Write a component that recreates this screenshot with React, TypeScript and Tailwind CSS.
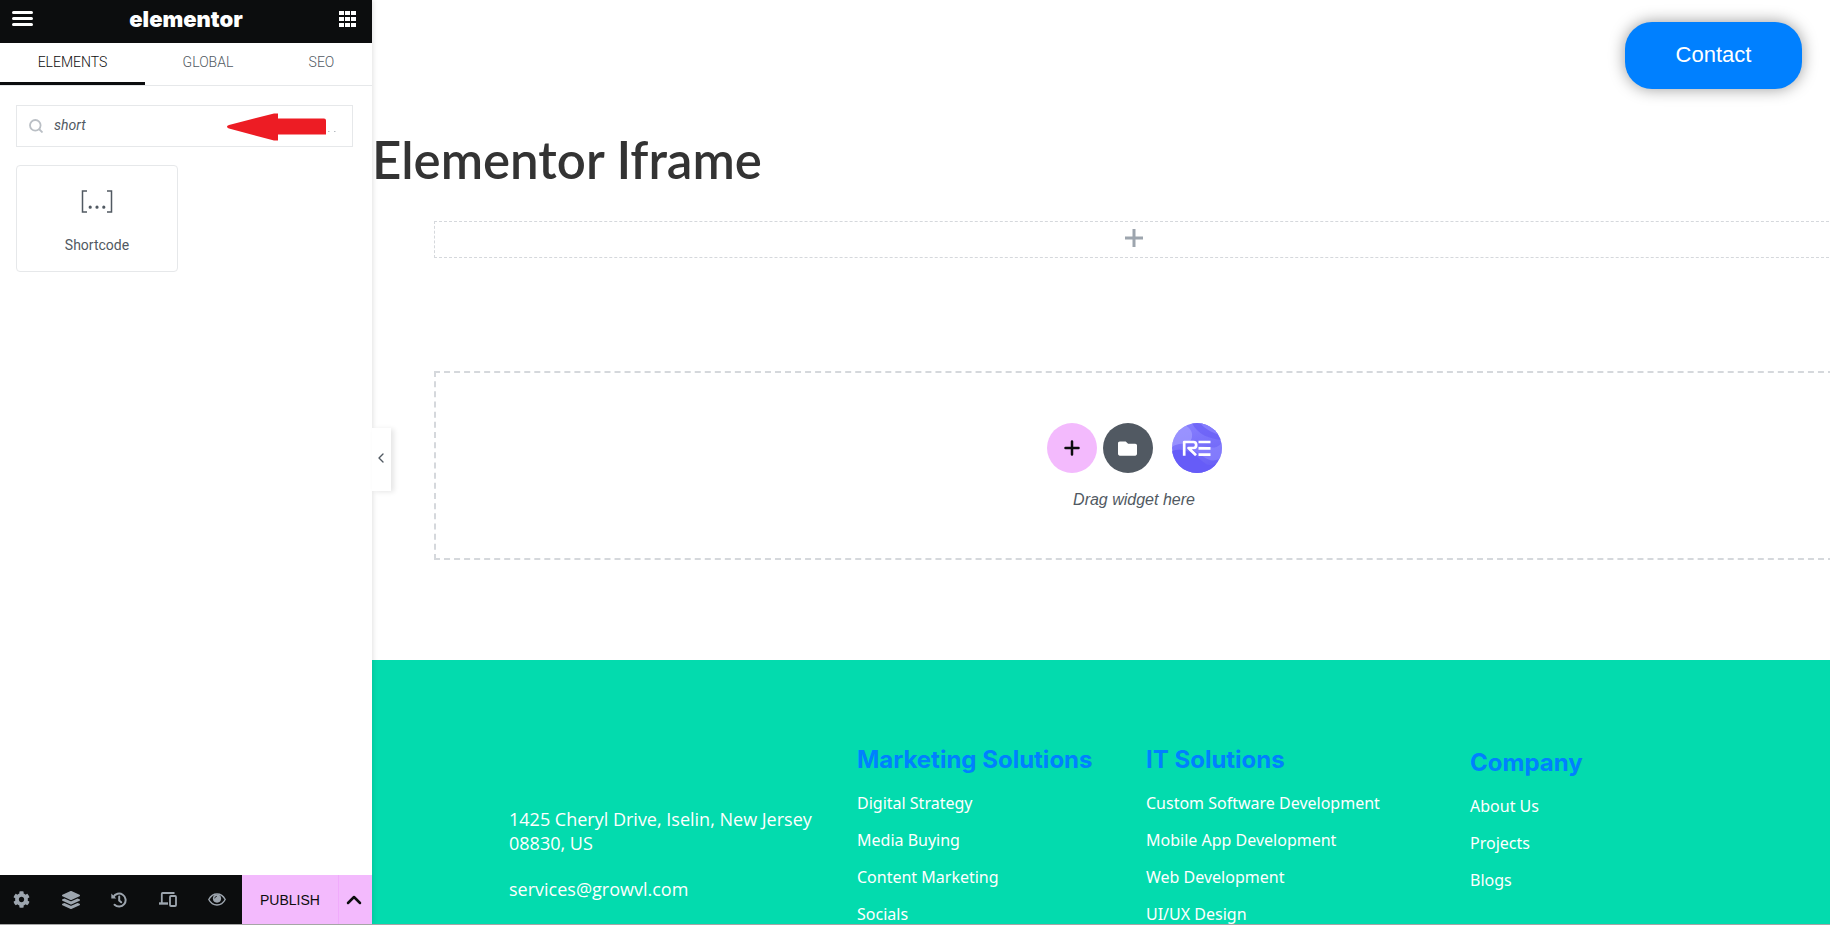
import { useState } from 'react'
import type { ReactNode } from 'react'
import { FaCog, FaFolder, FaLayerGroup } from 'react-icons/fa'
import { ChevronLeft, ChevronUp } from 'lucide-react'

const TABS = ['ELEMENTS', 'GLOBAL', 'SEO']

interface FooterColumnProps {
  title: string
  links: string[]
  className?: string
}

function HistoryIcon() {
  return (
    <svg width="16" height="16" viewBox="0 0 16 16" fill="none" stroke="currentColor" strokeWidth="2">
      <path d="M2.4 5A6.500 6.500 0 1 1 3.600 12.800" strokeLinecap="round" />
      <path d="M0.300 1.600v5h5z" fill="currentColor" stroke="none" />
      <path d="M8.200 4.500v4l2 1.800" strokeLinecap="round" />
    </svg>
  )
}

function ResponsiveIcon() {
  return (
    <svg width="18" height="15" viewBox="0 0 18 15" fill="none" stroke="currentColor" strokeWidth="1.800">
      <path d="M2.800 11V1.800Q2.800 1 3.600 1H15.500" />
      <path d="M0 11.500h9" strokeWidth="2.400" />
      <rect x="11" y="4" width="6" height="10" rx="1" />
    </svg>
  )
}

function EyeIcon() {
  return (
    <svg width="18" height="13" viewBox="0 0 18 13" fill="none" stroke="currentColor" strokeWidth="1.400">
      <path d="M.8 6.500C2.600 3 5.500 1 9 1s6.400 2 8.200 5.500C15.400 10 12.500 12 9 12S2.600 10 .8 6.500z" />
      <circle cx="9" cy="5.600" r="4.100" fill="currentColor" stroke="none" />
      <path d="M6.700 5.400A2.300 2.300 0 0 1 8.900 3.300" stroke="#0c0d0e" strokeWidth=".8" />
    </svg>
  )
}

function RedArrow() {
  return (
    <svg className="pointer-events-none absolute top-[7px] right-[14px]" width="112" height="28" viewBox="0 0 112 28">
      <path d="M1 13.500Q1 12.500 3 12L48 .5h4V5.500h46q2 0 2 2V21.500H52v6h-4L3 15.500Q1 15 1 13.500z" fill="#ed1c24" />
      <path d="M102 18.500h1.500M108 18.500h1.500" stroke="#b5bac0" />
    </svg>
  )
}

function RoyalLogo() {
  return (
    <svg width="50" height="50" viewBox="0 0 50 50">
      <defs>
        <linearGradient id="royal" x1="0" y1="0" x2="0.300" y2="1">
          <stop offset="0" stopColor="#8a82ff" />
          <stop offset="1" stopColor="#6a61f6" />
        </linearGradient>
        <clipPath id="royalClip">
          <circle cx="25" cy="25" r="25" />
        </clipPath>
      </defs>
      <g clipPath="url(#royalClip)">
        <rect width="50" height="50" fill="url(#royal)" />
        <path d="M0 24C8 18 18 24 20 14C21 7 16 4 13 2L0 0z" fill="#a29cff" opacity=".7" />
        <path d="M20 0C26 12 38 16 50 17V0z" fill="#6c62f6" opacity=".8" />
        <path d="M28 0C34 7 42 11 50 12V0z" fill="#8f88ff" opacity=".7" />
        <path d="M0 28C12 24 22 30 30 38C36 44 42 43 50 38V50H0z" fill="#665cf8" />
        <path d="M22 28C32 32 36 42 50 35V20C40 30 34 20 22 24z" fill="#8f88ff" opacity=".6" />
      </g>
      <g fill="none" stroke="#fff" strokeWidth="2.700">
        <path d="M12.200 32.800V19H21.500Q24.200 19 24.200 22T21.500 25H16.500L24 32.200" strokeLinejoin="round" />
        <path d="M26.500 19H38.500M26.500 25.300H38.500M26.500 31.600H38.500" />
      </g>
    </svg>
  )
}

function FooterTool({ label, children }: { label: string; children: ReactNode }) {
  return (
    <button type="button" aria-label={label} className="flex items-center text-[#9da5ae]">
      {children}
    </button>
  )
}

function FooterColumn({ title, links, className }: FooterColumnProps) {
  return (
    <div className={className}>
      <h3 className="font-['Inter','Liberation_Sans',sans-serif] text-2xl leading-8 font-bold whitespace-nowrap text-[#0080ff]">
        {title}
      </h3>
      <ul className="mt-[15px] space-y-[13px]">
        {links.map((link) => (
          <li key={link} className="leading-6">
            <a href="#" className="whitespace-nowrap">{link}</a>
          </li>
        ))}
      </ul>
    </div>
  )
}

function Sidebar() {
  const [tab, setTab] = useState('ELEMENTS')
  const [query, setQuery] = useState('short')

  return (
    <aside className="relative z-10 flex w-[372px] shrink-0 flex-col bg-white font-['Roboto','Liberation_Sans',sans-serif] text-[#515962] shadow-[1px_0_5px_rgba(0,0,0,0.12)]">
      <header className="flex h-[43px] items-center justify-between bg-[#0c0d0e] px-3 pb-[6px] text-white">
        <button type="button" aria-label="Menu">
          <svg width="21" height="15" viewBox="0 0 21 15" stroke="currentColor" strokeWidth="3" strokeLinecap="round">
            <path d="M1.500 1.500h18M1.500 7.500h18M1.500 13.500h18" />
          </svg>
        </button>
        <span className="font-['Inter','Liberation_Sans',sans-serif] text-[22px] leading-6 font-black">elementor</span>
        <button type="button" aria-label="Widgets" className="mr-1">
          <svg width="17" height="16" viewBox="0 0 17 16" fill="currentColor">
            <path d="M0 0h5v4H0zM6 0h5v4H6zM12 0h5v4h-5zM0 6h5v4H0zM6 6h5v4H6zM12 6h5v4h-5zM0 12h5v4H0zM6 12h5v4H6zM12 12h5v4h-5z" />
          </svg>
        </button>
      </header>

      <nav className="flex h-[43px] border-b border-[#e6e8ea] text-sm font-light">
        {TABS.map((name) => (
          <button
            key={name}
            type="button"
            onClick={() => setTab(name)}
            className={`flex-auto border-b-3 pb-[2px] ${
              tab === name ? 'border-[#0c0d0e] text-[#0c0d0e]' : 'border-transparent'
            }`}
          >
            {name}
          </button>
        ))}
      </nav>

      <div className="flex-1 py-[19px] pr-[19px] pl-4">
        <div className="relative flex h-[42px] items-center border border-[#e6e8ea] pl-3">
          <svg width="14" height="14" viewBox="0 0 14 14" fill="none" stroke="#babfc5" strokeWidth="1.800">
            <circle cx="6.300" cy="6.300" r="5.300" />
            <path d="M10 10l3.500 3.500" />
          </svg>
          <input
            type="text"
            aria-label="Search widget"
            value={query}
            onChange={(e) => setQuery(e.target.value)}
            className="ml-[11px] min-w-0 flex-1 pb-[2px] text-sm italic outline-none"
          />
          <RedArrow />
        </div>
        <button
          type="button"
          className="mt-[18px] flex h-[107px] w-[162px] flex-col items-center rounded border border-[#e6e8ea] pt-6 text-sm"
        >
          <svg width="32" height="23" viewBox="0 0 32 23" fill="none" stroke="currentColor" strokeWidth="1.500">
            <path d="M6 1H1.500v21H6M26 1h4.500v21H26" />
            <path d="M9.200 17.200h.01M16 17.200h.01M22.800 17.200h.01" strokeWidth="3.200" strokeLinecap="round" />
          </svg>
          <span className="mt-[22px] leading-5">Shortcode</span>
        </button>
      </div>

      <footer className="flex h-[49px] bg-[#0c0d0e]">
        <div className="flex flex-1 justify-between pr-4 pl-[13px]">
          <FooterTool label="Settings"><FaCog size={17} /></FooterTool>
          <FooterTool label="Structure"><FaLayerGroup size={18} /></FooterTool>
          <FooterTool label="History"><HistoryIcon /></FooterTool>
          <FooterTool label="Responsive mode"><ResponsiveIcon /></FooterTool>
          <FooterTool label="Preview"><EyeIcon /></FooterTool>
        </div>
        <button
          type="button"
          className="w-[96px] bg-[#f3bafd] font-['Liberation_Sans',Arial,sans-serif] text-sm text-[#0c0d0e]"
        >
          PUBLISH
        </button>
        <button
          type="button"
          aria-label="Save options"
          className="flex w-[34px] items-center justify-center border-l border-[#f0abfc] bg-[#f3bafd] pr-[3px] text-[#0c0d0e]"
        >
          <ChevronUp size={24} strokeWidth={2.5} />
        </button>
      </footer>

      <button
        type="button"
        aria-label="Hide panel"
        className="absolute top-1/2 left-full -mt-[34px] flex h-[63px] w-[19px] items-center justify-center bg-white pr-[2px] pb-1 shadow-[3px_1px_5px_rgba(0,0,0,0.10)]"
      >
        <ChevronLeft size={16} strokeWidth={2} />
      </button>
    </aside>
  )
}

export default function App() {
  return (
    <div className="flex h-screen overflow-hidden border-b border-[#a6a6a6] bg-white">
      <Sidebar />
      <main className="flex min-w-0 flex-1 flex-col overflow-hidden">
        <div className="flex justify-end pt-[22px] pr-7">
          <button
            type="button"
            className="h-[67px] w-[177px] rounded-[27px] bg-[#0080ff] pb-[2px] font-['Liberation_Sans',Arial,sans-serif] text-[22px] text-white shadow-[0_0_16px_rgba(0,0,0,0.4)]"
          >
            Contact
          </button>
        </div>

        <h1 className="mt-9 font-['Lato','Noto_Sans',sans-serif] text-[51px] leading-[70px] font-semibold text-[#333]">
          Elementor Iframe
        </h1>

        <div className="-mr-1 ml-[62px]">
          <button
            type="button"
            aria-label="Add section"
            className="mt-[26px] flex h-[37px] w-full items-center justify-center border border-dashed border-[#d5d8dc] pb-1 text-[#9da5ae]"
          >
            <svg width="18" height="18" viewBox="0 0 18 18" stroke="currentColor" strokeWidth="3">
              <path d="M9 0v18M0 9h18" />
            </svg>
          </button>

          <section className="mt-[113px] flex h-[189px] flex-col items-center border-2 border-dashed border-[#d5d8dc] pt-[50px]">
            <div className="flex">
              <button
                type="button"
                aria-label="Add new container"
                className="flex size-[50px] items-center justify-center rounded-full bg-[#f3bafd] text-[#0c0d0e]"
              >
                <svg width="16" height="16" viewBox="0 0 16 16" stroke="currentColor" strokeWidth="2.500" strokeLinecap="round">
                  <path d="M8 1.500v13M1.500 8h13" />
                </svg>
              </button>
              <button
                type="button"
                aria-label="Add template"
                className="ml-[6px] flex size-[50px] items-center justify-center rounded-full bg-[#515962] text-white"
              >
                <FaFolder size={19} />
              </button>
              <button type="button" aria-label="Template library" className="ml-[19px]">
                <RoyalLogo />
              </button>
            </div>
            <p className="mt-[15px] font-['Liberation_Sans',Arial,sans-serif] leading-6 text-[#515962] italic">
              Drag widget here
            </p>
          </section>
        </div>

        <footer className="mt-[100px] flex flex-1 overflow-hidden bg-[#03dbae] pt-[84px] pl-[137px] font-['Noto_Sans',sans-serif] text-base text-white">
          <address className="w-[348px] shrink-0 pt-[63px] font-['Open_Sans','Noto_Sans',sans-serif] text-lg leading-6 font-medium not-italic">
            <p className="w-[320px]">1425 Cheryl Drive, Iselin, New Jersey 08830, US</p>
            <a href="#" className="mt-[22px] block">services@growvl.com</a>
          </address>
          <FooterColumn
            className="w-[289px] shrink-0"
            title="Marketing Solutions"
            links={['Digital Strategy', 'Media Buying', 'Content Marketing', 'Socials']}
          />
          <FooterColumn
            className="w-[324px] shrink-0"
            title="IT Solutions"
            links={['Custom Software Development', 'Mobile App Development', 'Web Development', 'UI/UX Design']}
          />
          <FooterColumn className="pt-[3px]" title="Company" links={['About Us', 'Projects', 'Blogs']} />
        </footer>
      </main>
    </div>
  )
}
